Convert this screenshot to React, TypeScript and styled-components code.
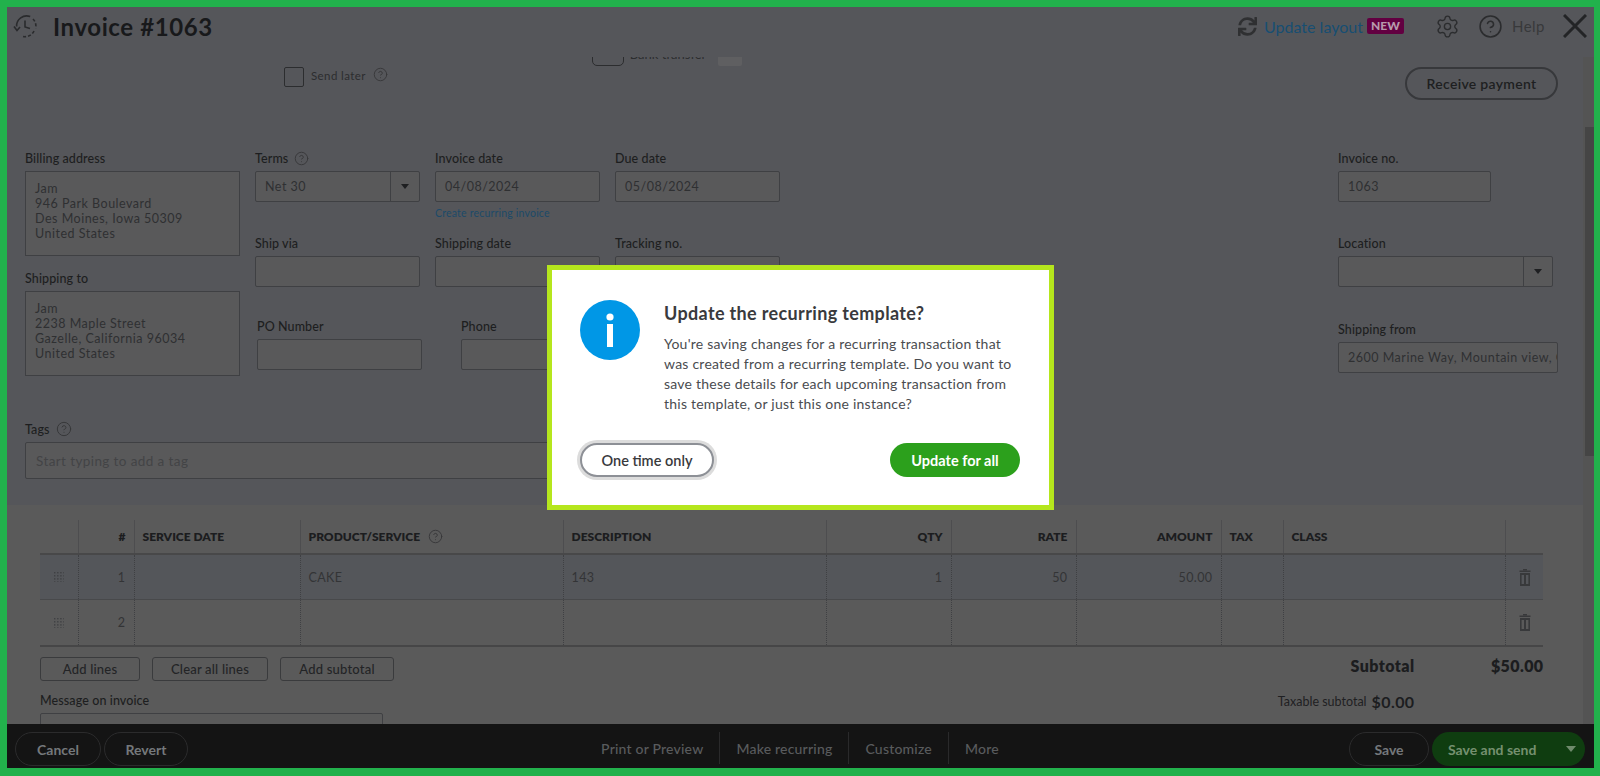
import { CircleHelp, Settings } from "lucide-react";
import { FaSync } from "react-icons/fa";
import styled, { createGlobalStyle } from "styled-components";

const GlobalStyle = createGlobalStyle`
  html, body {
    margin: 0;
    padding: 0;
    background: #55565a;
  }
  * {
    box-sizing: border-box;
  }
`;

const Frame = styled.div`
  position: relative;
  width: 1600px;
  height: 776px;
  display: flex;
  flex-direction: column;
  overflow: hidden;
  border-style: solid;
  border-color: #22b14c;
  border-width: 7px 6px 8px 7px;
  background: #55565a;
  font-family: Lato, "Open Sans", sans-serif;
  color: #202124;
`;

const Header = styled.header`
  flex: 0 0 50px;
  display: flex;
  align-items: center;
  padding: 0 7px 12px 6px;
  position: relative;
  z-index: 1;
  background: #55565a;
`;

const Title = styled.h1`
  margin: 0 0 0 14px;
  font-size: 24px;
  font-weight: 700;
  letter-spacing: 0.6px;
  color: #18191b;
`;

const HeaderTools = styled.div`
  margin-left: auto;
  display: flex;
  align-items: center;
  color: #2b2c2e;
`;

const LayoutLink = styled.a`
  margin-left: 7px;
  font-size: 16px;
  color: #174e72;
`;

const NewBadge = styled.span`
  margin: 0 31px 0 4px;
  width: 37px;
  height: 16px;
  border-radius: 2px;
  background: #620041;
  color: #b79aac;
  font-size: 12px;
  font-weight: 900;
  line-height: 16px;
  text-align: center;
`;

const HelpText = styled.span`
  margin: 0 18px 0 9px;
  font-size: 15px;
  letter-spacing: 0.5px;
  color: #38393b;
`;

const Body = styled.div`
  flex: 1;
  min-height: 0;
  display: flex;
`;

const Content = styled.main`
  flex: 1;
  min-width: 0;
  display: flex;
  flex-direction: column;
`;

const TopSection = styled.section`
  flex: 0 0 448px;
  padding: 0 25px 0 18px;
`;

const ActionRow = styled.div`
  height: 93px;
  padding: 10px 0 0 259px;
  display: flex;
  align-items: flex-start;
`;

const Checkbox = styled.span`
  width: 20px;
  height: 20px;
  border: 1px solid #2c2d2f;
  border-radius: 2px;
`;

const SendLater = styled.span`
  margin: 2px 7px 0 7px;
  font-size: 11.5px;
  letter-spacing: 0.4px;
  color: #2c2d2f;
`;

const BankGroup = styled.div`
  height: 9px;
  margin: -10px 0 0 204px;
  display: flex;
  align-items: flex-end;
  overflow: hidden;
`;

const BankChip = styled.span`
  width: 32px;
  height: 20px;
  border: 1px solid #2c2d2f;
  border-radius: 5px;
`;

const BankText = styled.span`
  margin-left: 6px;
  font-size: 13px;
  line-height: 13px;
  color: #2c2d2f;
  transform: translateY(-5px);
`;

const BankToggle = styled.span`
  width: 24px;
  height: 20px;
  margin-left: 12px;
  border-radius: 2px;
  background: #5f5f61;
`;

const ReceiveButton = styled.button`
  margin-left: auto;
  width: 153px;
  height: 33px;
  border: 2px solid #37383b;
  border-radius: 17px;
  background: transparent;
  color: #1e1f21;
  font: 600 14px Lato, sans-serif;
  letter-spacing: 0.3px;
`;

const FormArea = styled.div`
  display: flex;
`;

const AddressColumn = styled.div`
  flex: 0 0 215px;
`;

const Label = styled.div<{ $top?: number }>`
  height: 16px;
  margin: ${(p) => p.$top ?? 0}px 0 5px;
  display: flex;
  align-items: center;
  gap: 6px;
  font-size: 12.5px;
  font-weight: 500;
  letter-spacing: 0.1px;
  color: #1d1e20;
  white-space: nowrap;
`;

const AddressBox = styled.div`
  height: 85px;
  padding: 9px 9px 0;
  border: 1px solid #3f4043;
  background: #59595a;
  font-size: 12.5px;
  line-height: 15px;
  letter-spacing: 0.5px;
  color: #2f3032;
  white-space: pre-line;
`;

const FieldsColumn = styled.div`
  margin-left: 15px;
`;

const FieldRow = styled.div<{ $height: number; $inset?: number; $gap?: number }>`
  height: ${(p) => p.$height}px;
  margin-left: ${(p) => p.$inset ?? 0}px;
  display: flex;
  gap: ${(p) => p.$gap ?? 15}px;
`;

const Field = styled.div<{ $width?: number }>`
  width: ${(p) => p.$width ?? 165}px;
`;

const InputBox = styled.div`
  height: 31px;
  display: flex;
  align-items: center;
  overflow: hidden;
  border: 1px solid #3f4043;
  border-radius: 2px;
  background: #59595a;
  font-size: 12.5px;
  letter-spacing: 0.5px;
  color: #2f3032;
  white-space: nowrap;
`;

const InputValue = styled.span`
  flex: 1;
  min-width: 0;
  overflow: hidden;
  padding-left: 9px;
`;

const SelectArrow = styled.span`
  flex: 0 0 29px;
  height: 100%;
  display: flex;
  align-items: center;
  justify-content: center;
  border-left: 1px solid #3f4043;
  &::after {
    content: "";
    border-left: 4px solid transparent;
    border-right: 4px solid transparent;
    border-top: 5px solid #1e1f21;
  }
`;

const RecurringLink = styled.a`
  display: block;
  margin-top: 5px;
  font-size: 10.5px;
  letter-spacing: 0.2px;
  color: #1c4a69;
`;

const RightColumn = styled.div`
  margin-left: auto;
  flex: 0 0 220px;
`;

const TagsInput = styled.div`
  width: 1000px;
  height: 37px;
  padding: 0 0 0 10px;
  display: flex;
  align-items: center;
  border: 1px solid #3f4043;
  border-radius: 2px;
  background: #59595a;
`;

const TagsPlaceholder = styled.span`
  width: 152px;
  overflow: hidden;
  font-size: 13.5px;
  letter-spacing: 0.4px;
  color: #434446;
  white-space: nowrap;
`;

const LowerSection = styled.section`
  flex: 1;
  min-height: 0;
  overflow: hidden;
  padding: 15px 40px 0 33px;
  background: #5a5a5a;
`;

const COLUMNS = "38.5px 56px 166px 263px 263px 125px 125px 145px 62px 222px 38px";

const TableHead = styled.div`
  height: 35px;
  display: grid;
  grid-template-columns: ${COLUMNS};
  border-bottom: 2px solid #484849;
`;

const TableRow = styled.div<{ $active?: boolean; $last?: boolean }>`
  height: ${(p) => (p.$last ? 47 : 45)}px;
  display: grid;
  grid-template-columns: ${COLUMNS};
  background: ${(p) => (p.$active ? "#54565a" : "transparent")};
  border-bottom: ${(p) => (p.$last ? "2px solid #464647" : "1px solid #48494b")};
`;

const HeadCell = styled.div<{ $right?: boolean }>`
  display: flex;
  align-items: center;
  justify-content: ${(p) => (p.$right ? "flex-end" : "flex-start")};
  gap: 8px;
  padding: 0 8px;
  border-right: 1px solid #4d4d4f;
  font-size: 12px;
  font-weight: 800;
  color: #1c1d1f;
  white-space: nowrap;
  &:last-child {
    border-right: 0;
  }
`;

const Cell = styled.div<{ $right?: boolean; $center?: boolean }>`
  display: flex;
  align-items: center;
  justify-content: ${(p) => (p.$center ? "center" : p.$right ? "flex-end" : "flex-start")};
  padding: 0 8px;
  border-right: 1px dotted #3f4043;
  font-size: 12.5px;
  letter-spacing: 0.4px;
  color: #333436;
  &:last-child {
    border-right: 0;
  }
`;

const BelowTable = styled.div`
  width: 1503.5px;
  display: flex;
  justify-content: space-between;
`;

const BelowLeft = styled.div`
  padding-top: 10px;
  width: 353px;
`;

const LineButtons = styled.div`
  display: flex;
  gap: 12px;
`;

const LineButton = styled.button<{ $width: number }>`
  flex: 0 0 ${(p) => p.$width}px;
  height: 24px;
  border: 1px solid #3a3b3d;
  border-radius: 3px;
  background: transparent;
  color: #232426;
  font: 500 13px Lato, sans-serif;
  letter-spacing: 0.2px;
`;

const MessageLabel = styled(Label)`
  margin: 11px 0 5px;
  width: 353px;
`;

const MessageBox = styled.div`
  width: 343px;
  height: 40px;
  border: 1px solid #3f4043;
  border-radius: 2px;
`;

const Totals = styled.div`
  padding-top: 9px;
  display: flex;
  flex-direction: column;
  align-items: flex-end;
`;

const SubtotalRow = styled.div`
  height: 20px;
  display: flex;
  font-size: 16px;
  font-weight: 800;
  letter-spacing: 0.4px;
  color: #1c1d1f;
`;

const SubtotalAmount = styled.span`
  width: 129px;
  text-align: right;
`;

const TaxableRow = styled.div`
  height: 20px;
  margin: 15px 129px 0 0;
  display: flex;
  align-items: center;
  gap: 5px;
  font-size: 12.5px;
  color: #1f2022;
`;

const TaxableAmount = styled.span`
  font-size: 16px;
  font-weight: 700;
  letter-spacing: 0.4px;
  color: #1c1d1f;
`;

const ScrollTrack = styled.div`
  flex: 0 0 11px;
  padding-left: 2px;
  background: #545454;
  position: relative;
`;

const ScrollThumb = styled.div`
  margin-top: 70px;
  height: 329px;
  background: #454545;
`;

const Footer = styled.footer`
  flex: 0 0 44px;
  padding: 8px 9px 0 8px;
  display: grid;
  grid-template-columns: 1fr auto 1fr;
  align-items: start;
  background: #141414;
`;

const FooterGroup = styled.div<{ $end?: boolean }>`
  display: flex;
  gap: 3px;
  justify-content: ${(p) => (p.$end ? "flex-end" : "flex-start")};
`;

const Pill = styled.button<{ $width: number }>`
  width: ${(p) => p.$width}px;
  height: 34px;
  border: 1px solid #2b2b2c;
  border-radius: 17px;
  background: transparent;
  color: #74787b;
  font: 700 14px Lato, sans-serif;
`;

const SendPill = styled.button`
  width: 153px;
  height: 34px;
  padding: 0 9px 0 16px;
  display: flex;
  align-items: center;
  justify-content: space-between;
  border: 0;
  border-radius: 17px;
  background: #0f3d10;
  color: #75906f;
  font: 700 14px Lato, sans-serif;
  &::after {
    content: "";
    border-left: 5px solid transparent;
    border-right: 5px solid transparent;
    border-top: 6px solid #6f8a6c;
  }
`;

const FooterNav = styled.nav`
  height: 32px;
  display: flex;
  align-items: center;
  margin-top: 0;
`;

const NavItem = styled.span`
  height: 32px;
  padding: 0 16px;
  display: flex;
  align-items: center;
  border-right: 1px solid #2a2a2b;
  font-size: 14px;
  font-weight: 500;
  letter-spacing: 0.2px;
  color: #595b5d;
  &:last-child {
    border-right: 0;
  }
`;

const Modal = styled.div`
  position: absolute;
  left: 540px;
  top: 258px;
  z-index: 2;
  width: 507px;
  height: 245px;
  padding: 30px 29px 0 28px;
  border: 5px solid #b5e61d;
  background: #fff;
`;

const ModalBody = styled.div`
  display: flex;
  gap: 24px;
  height: 143px;
`;

const InfoCircle = styled.svg`
  flex: 0 0 60px;
  width: 60px;
  height: 60px;
`;

const ModalTitle = styled.h2`
  margin: 2px 0 10px;
  font-size: 18px;
  line-height: 22px;
  font-weight: 700;
  letter-spacing: 0.35px;
  color: #393a3d;
`;

const ModalText = styled.p`
  margin: 0;
  width: 350px;
  font-size: 14px;
  line-height: 20px;
  letter-spacing: 0.23px;
  color: #4a4c50;
`;

const ModalActions = styled.div`
  display: flex;
  justify-content: space-between;
`;

const OutlineButton = styled.button`
  width: 134px;
  height: 34px;
  border: 2px solid #8d9096;
  border-radius: 17px;
  background: #fff;
  box-shadow: 0 0 0 3px #dcdcdc;
  color: #393a3d;
  font: 600 14.5px Lato, sans-serif;
`;

const PrimaryButton = styled.button`
  width: 130px;
  height: 34px;
  border: 0;
  border-radius: 17px;
  background: #2ca01c;
  color: #fff;
  font: 700 14.5px Lato, sans-serif;
`;

const HistoryIcon = () => (
  <svg width="26" height="26" viewBox="0 0 26 26" fill="none" stroke="#2a2b2d" strokeWidth="1.6">
    <path d="M3.6 13.5a10 10 0 0 1 13.6-9.9" />
    <path d="M20 6a10 10 0 0 1 2.6 9.5" strokeDasharray="3 2" />
    <path d="M21 18a10 10 0 0 1-11 5.5" strokeDasharray="3 2" />
    <path d="M1 13.5l3 4 3-3.6" />
    <path d="M12 7.5v6.5l5 1.5" />
  </svg>
);

const CloseIcon = () => (
  <svg width="24" height="24" viewBox="0 0 24 24" stroke="#232426" strokeWidth="3">
    <path d="M1 1l22 22M23 1L1 23" />
  </svg>
);

const DragDots = () => (
  <svg width="10" height="10" viewBox="0 0 10 10" fill="#3f4043">
    {[0, 1, 2, 3].flatMap((r) =>
      [0, 1, 2, 3].map((c) => <rect key={`${r}${c}`} x={c * 3.1} y={r * 3.1} width="1.4" height="1.4" />)
    )}
  </svg>
);

const TrashIcon = () => (
  <svg width="12" height="17" viewBox="0 0 12 17" fill="#38393b">
    <rect x="4" y="0" width="4" height="1.5" />
    <rect x="0.5" y="1.5" width="11" height="1.5" />
    <path d="M1 4h10v13H1zM2.6 6v9h2.4V6zM7 6v9h2.4V6z" fillRule="evenodd" />
  </svg>
);

const Help = ({ size = 15 }: { size?: number }) => (
  <CircleHelp size={size} strokeWidth={1.5} color="#37383a" />
);

const headers = [
  { text: "" },
  { text: "#", right: true },
  { text: "SERVICE DATE" },
  { text: "PRODUCT/SERVICE", help: true },
  { text: "DESCRIPTION" },
  { text: "QTY", right: true },
  { text: "RATE", right: true },
  { text: "AMOUNT", right: true },
  { text: "TAX" },
  { text: "CLASS" },
  { text: "" },
];

const rows = [
  { no: "1", product: "CAKE", description: "143", qty: "1", rate: "50", amount: "50.00" },
  { no: "2", product: "", description: "", qty: "", rate: "", amount: "" },
];

export default function App() {
  return (
    <>
      <GlobalStyle />
      <Frame>
        <Header>
          <HistoryIcon />
          <Title>Invoice #1063</Title>
          <HeaderTools>
            <FaSync size={19} color="#2f3032" />
            <LayoutLink>Update layout</LayoutLink>
            <NewBadge>NEW</NewBadge>
            <Settings size={25} strokeWidth={1.3} color="#2b2c2e" />
            <span style={{ width: 18 }} />
            <CircleHelp size={25} strokeWidth={1.5} color="#2b2c2e" />
            <HelpText>Help</HelpText>
            <CloseIcon />
          </HeaderTools>
        </Header>
        <Body>
          <Content>
            <TopSection>
              <ActionRow>
                <Checkbox />
                <SendLater>Send later</SendLater>
                <Help />
                <BankGroup>
                  <BankChip />
                  <BankText>Bank transfer</BankText>
                  <BankToggle />
                </BankGroup>
                <ReceiveButton>Receive payment</ReceiveButton>
              </ActionRow>
              <FormArea>
                <AddressColumn>
                  <Label>Billing address</Label>
                  <AddressBox>{"Jam\n946 Park Boulevard\nDes Moines, Iowa  50309\nUnited States"}</AddressBox>
                  <Label $top={14}>Shipping to</Label>
                  <AddressBox>{"Jam\n2238 Maple Street\nGazelle, California  96034\nUnited States"}</AddressBox>
                </AddressColumn>
                <FieldsColumn>
                  <FieldRow $height={85}>
                    <Field>
                      <Label>
                        Terms <Help />
                      </Label>
                      <InputBox>
                        <InputValue>Net 30</InputValue>
                        <SelectArrow />
                      </InputBox>
                    </Field>
                    <Field>
                      <Label>Invoice date</Label>
                      <InputBox>
                        <InputValue>04/08/2024</InputValue>
                      </InputBox>
                      <RecurringLink>Create recurring invoice</RecurringLink>
                    </Field>
                    <Field>
                      <Label>Due date</Label>
                      <InputBox>
                        <InputValue>05/08/2024</InputValue>
                      </InputBox>
                    </Field>
                  </FieldRow>
                  <FieldRow $height={83}>
                    <Field>
                      <Label>Ship via</Label>
                      <InputBox />
                    </Field>
                    <Field>
                      <Label>Shipping date</Label>
                      <InputBox />
                    </Field>
                    <Field>
                      <Label>Tracking no.</Label>
                      <InputBox />
                    </Field>
                  </FieldRow>
                  <FieldRow $height={60} $inset={2} $gap={39}>
                    <Field>
                      <Label>PO Number</Label>
                      <InputBox />
                    </Field>
                    <Field>
                      <Label>Phone</Label>
                      <InputBox />
                    </Field>
                  </FieldRow>
                </FieldsColumn>
                <RightColumn>
                  <Field $width={153}>
                    <Label>Invoice no.</Label>
                    <InputBox>
                      <InputValue>1063</InputValue>
                    </InputBox>
                  </Field>
                  <Field $width={215}>
                    <Label $top={33}>Location</Label>
                    <InputBox>
                      <InputValue />
                      <SelectArrow />
                    </InputBox>
                  </Field>
                  <Field $width={220}>
                    <Label $top={34}>Shipping from</Label>
                    <InputBox>
                      <InputValue>2600 Marine Way, Mountain view, CA</InputValue>
                    </InputBox>
                  </Field>
                </RightColumn>
              </FormArea>
              <Label $top={43}>
                <span>Tags</span>
                <Help size={16} />
              </Label>
              <TagsInput>
                <TagsPlaceholder>Start typing to add a tag</TagsPlaceholder>
              </TagsInput>
            </TopSection>
            <LowerSection>
              <TableHead>
                {headers.map((h, i) => (
                  <HeadCell key={i} $right={h.right}>
                    {h.text}
                    {h.help && <Help />}
                  </HeadCell>
                ))}
              </TableHead>
              {rows.map((r, i) => (
                <TableRow key={r.no} $active={i === 0} $last={i === rows.length - 1}>
                  <Cell $center>
                    <DragDots />
                  </Cell>
                  <Cell $right>{r.no}</Cell>
                  <Cell />
                  <Cell>{r.product}</Cell>
                  <Cell>{r.description}</Cell>
                  <Cell $right>{r.qty}</Cell>
                  <Cell $right>{r.rate}</Cell>
                  <Cell $right>{r.amount}</Cell>
                  <Cell />
                  <Cell />
                  <Cell $center>
                    <TrashIcon />
                  </Cell>
                </TableRow>
              ))}
              <BelowTable>
                <BelowLeft>
                  <LineButtons>
                    <LineButton $width={100}>Add lines</LineButton>
                    <LineButton $width={116}>Clear all lines</LineButton>
                    <LineButton $width={114}>Add subtotal</LineButton>
                  </LineButtons>
                  <MessageLabel>Message on invoice</MessageLabel>
                  <MessageBox />
                </BelowLeft>
                <Totals>
                  <SubtotalRow>
                    Subtotal
                    <SubtotalAmount>$50.00</SubtotalAmount>
                  </SubtotalRow>
                  <TaxableRow>
                    Taxable subtotal
                    <TaxableAmount>$0.00</TaxableAmount>
                  </TaxableRow>
                </Totals>
              </BelowTable>
            </LowerSection>
          </Content>
          <ScrollTrack>
            <ScrollThumb />
          </ScrollTrack>
        </Body>
        <Footer>
          <FooterGroup>
            <Pill $width={86}>Cancel</Pill>
            <Pill $width={84}>Revert</Pill>
          </FooterGroup>
          <FooterNav>
            <NavItem>Print or Preview</NavItem>
            <NavItem>Make recurring</NavItem>
            <NavItem>Customize</NavItem>
            <NavItem>More</NavItem>
          </FooterNav>
          <FooterGroup $end>
            <Pill $width={80}>Save</Pill>
            <SendPill>Save and send</SendPill>
          </FooterGroup>
        </Footer>
        <Modal>
          <ModalBody>
            <InfoCircle viewBox="0 0 60 60">
              <circle cx="30" cy="30" r="30" fill="#0097e6" />
              <circle cx="30" cy="17" r="3.6" fill="#fff" />
              <rect x="27" y="24" width="6" height="23" fill="#fff" />
            </InfoCircle>
            <div>
              <ModalTitle>Update the recurring template?</ModalTitle>
              <ModalText>
                You're saving changes for a recurring transaction that was created from a recurring template. Do you
                want to save these details for each upcoming transaction from this template, or just this one instance?
              </ModalText>
            </div>
          </ModalBody>
          <ModalActions>
            <OutlineButton>One time only</OutlineButton>
            <PrimaryButton>Update for all</PrimaryButton>
          </ModalActions>
        </Modal>
      </Frame>
    </>
  );
}
